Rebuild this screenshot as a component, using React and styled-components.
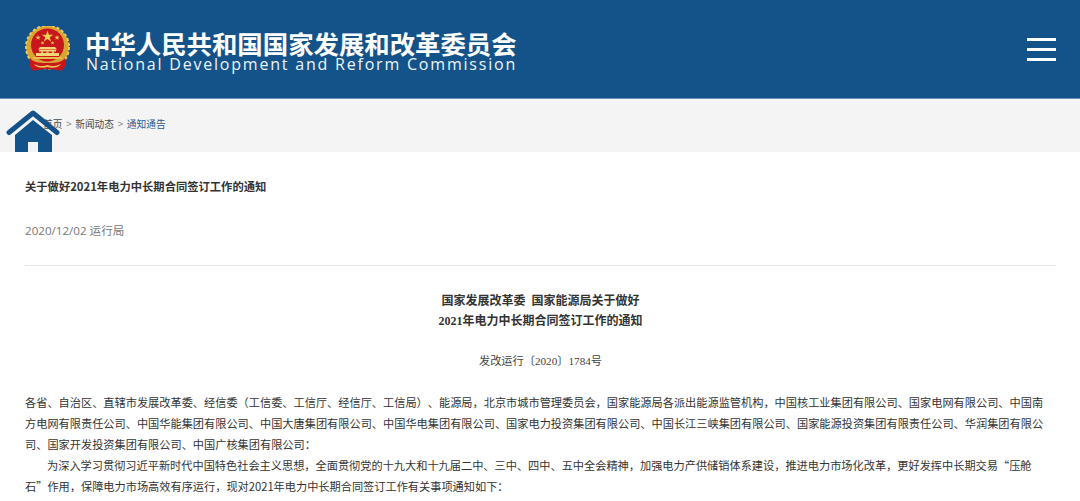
import React from 'react'
import styled, { createGlobalStyle } from 'styled-components'

const GlobalStyle = createGlobalStyle`
  html, body { margin: 0; padding: 0; background: #fff; }
  body { font-family: "Noto Sans CJK SC", sans-serif; text-spacing-trim: space-all; }
`
const Page = styled.div`
  position: relative;
  width: 1080px;
  height: 501px;
  overflow: hidden;
`
const Header = styled.header`
  height: 99px;
  box-sizing: border-box;
  padding: 0 24px 0 25px;
  background: #14538a;
  border-bottom: 1px solid #6f93b8;
  display: flex;
  align-items: center;
  justify-content: space-between;
`
const Brand = styled.div`
  display: flex;
  align-items: center;
  gap: 15px;
`
const BrandText = styled.div`
  display: flex;
  flex-direction: column;
  padding-top: 7px;
  color: #fff;
`
const BrandCn = styled.div`
  font: 700 25.4px/23px "Noto Sans CJK SC", sans-serif;
  white-space: nowrap;
`
const BrandEn = styled.div`
  font: 400 16px/18px "Open Sans", sans-serif;
  letter-spacing: 1.79px;
  margin-left: 1px;
  white-space: nowrap;
  color: #eef3f8;
`
const Menu = styled.button`
  width: 29px;
  height: 23px;
  padding: 0;
  border: 0;
  background: none;
  display: flex;
  flex-direction: column;
  justify-content: space-between;
  margin-top: 1px;
`
const MenuBar = styled.span`
  display: block;
  height: 3px;
  background: #fff;
`
const CrumbBar = styled.nav`
  height: 53px;
  background: #f4f4f4;
  box-sizing: border-box;
  padding: 0 0 3px 43px;
  display: flex;
  align-items: center;
  gap: 3.6px;
  font: 400 9.7px/14px "Noto Sans CJK SC", sans-serif;
  color: #4a4a4a;
`
const CrumbSep = styled.span`
  color: #888;
  font-family: "Liberation Sans", sans-serif;
`
const CrumbCurrent = styled.span`
  color: #2c5c8c;
`
const HomeIcon = styled.svg`
  position: absolute;
  left: 6px;
  top: 110px;
  width: 54px;
  height: 42px;
`
const Article = styled.main`
  padding: 24px 24px 0 25px;
`
const Heading = styled.h1`
  margin: 0;
  font: 700 11.3px/20px "Noto Sans CJK SC", sans-serif;
  color: #333;
`
const Meta = styled.div`
  margin-top: 25px;
  padding-bottom: 24px;
  border-bottom: 1px solid #e5e5e5;
  font: 400 11.6px/20px "Open Sans", "Noto Sans CJK SC", sans-serif;
  color: #777;
`
const Notice = styled.div`
  margin-top: 25px;
  font-family: "Liberation Serif", "Noto Sans CJK SC", serif;
  font-size: 11.2px;
  line-height: 20px;
  color: #333;
  text-align: center;
`
const NoticeTitle = styled.div`
  font-size: 12px;
  font-weight: 700;
`
const DocNumber = styled.div`
  margin-top: 20px;
  color: #444;
`
const Body = styled.div`
  margin-top: 21px;
  padding-right: 11px;
  font: 400 11.2px/21px "Noto Sans CJK SC", sans-serif;
  color: #333;
  text-align: left;
`
const Para = styled.p`
  margin: 0;
  text-indent: ${p => (p.$indent ? '22px' : '0')};
`

const Emblem = () => (
  <svg width="45" height="47" viewBox="0 0 45 47">
    <circle cx="22.5" cy="21" r="21.5" fill="#d9a531" />
    <circle cx="22.5" cy="21" r="21.5" fill="none" stroke="#f0c95a" strokeWidth="2" strokeDasharray="3 2" />
    <circle cx="22.5" cy="19" r="16.5" fill="#c8161d" />
    <path d="M22.5 4.5l1.4 4.2h4.4l-3.6 2.6 1.4 4.2-3.6-2.6-3.6 2.6 1.4-4.2-3.6-2.6h4.4z" fill="#f5d04e" />
    <path d="M13 9l.7 1.8h1.9l-1.5 1.2.6 1.8-1.7-1.1-1.6 1.1.6-1.8-1.5-1.2h1.9zM32 9l.7 1.8h1.9l-1.5 1.2.6 1.8-1.7-1.1-1.6 1.1.6-1.8-1.5-1.2h1.9zM17.5 15l.5 1.3h1.4l-1.1.9.4 1.3-1.2-.8-1.2.8.4-1.3-1.1-.9H17zM27.5 15l.5 1.3h1.4l-1.1.9.4 1.3-1.2-.8-1.2.8.4-1.3-1.1-.9H27z" fill="#f0c64a" />
    <path d="M15 21h15l2 2.5H13zM14 24h17v1.5H14zM11 27h23v3H11z" fill="#f3d573" />
    <path d="M16 25.5h2v1.5h-2zM21.5 25.5h2v1.5h-2zM27 25.5h2v1.5h-2z" fill="#f3d573" />
    <path d="M8 31h29v2H8z" fill="#e9bb4a" />
    <path d="M5 32c3 4 7 5 17.5 5S37 36 40 32l1 8c-2 1-3 3-4 5-4-1-9-2-14.500-2S12 44 8 45c-1-2-2-4-4-5z" fill="#c8161d" />
    <path d="M9 38c4 2 9 3 13.500 1 4.500 2 9 1 13.500-1-3 4-9 4.500-13.500 3-4.500 1.500-10.500 1-13.500-3z" fill="#eec24f" />
  </svg>
)

const App = () => (
  <Page>
    <GlobalStyle />
    <Header>
      <Brand>
        <Emblem />
        <BrandText>
          <BrandCn>中华人民共和国国家发展和改革委员会</BrandCn>
          <BrandEn>National Development and Reform Commission</BrandEn>
        </BrandText>
      </Brand>
      <Menu aria-label="menu">
        <MenuBar />
        <MenuBar />
        <MenuBar />
      </Menu>
    </Header>
    <CrumbBar>
      <span>首页</span>
      <CrumbSep>&gt;</CrumbSep>
      <span>新闻动态</span>
      <CrumbSep>&gt;</CrumbSep>
      <CrumbCurrent>通知通告</CrumbCurrent>
    </CrumbBar>
    <HomeIcon viewBox="0 0 54 42">
      <path d="M3 22.500L27 3l24 19.500" fill="none" stroke="#14538a" strokeWidth="5" strokeLinecap="round" strokeLinejoin="round" />
      <path d="M9 25L27 10 46 25v17H32V32H22v10H9z" fill="#14538a" />
    </HomeIcon>
    <Article>
      <Heading>关于做好2021年电力中长期合同签订工作的通知</Heading>
      <Meta>2020/12/02 运行局</Meta>
      <Notice>
        <NoticeTitle>国家发展改革委&nbsp; 国家能源局关于做好</NoticeTitle>
        <NoticeTitle>2021年电力中长期合同签订工作的通知</NoticeTitle>
        <DocNumber>发改运行〔2020〕1784号</DocNumber>
        <Body>
          <Para>各省、自治区、直辖市发展改革委、经信委（工信委、工信厅、经信厅、工信局）、能源局，北京市城市管理委员会，国家能源局各派出能源监管机构，中国核工业集团有限公司、国家电网有限公司、中国南方电网有限责任公司、中国华能集团有限公司、中国大唐集团有限公司、中国华电集团有限公司、国家电力投资集团有限公司、中国长江三峡集团有限公司、国家能源投资集团有限责任公司、华润集团有限公司、国家开发投资集团有限公司、中国广核集团有限公司：</Para>
          <Para $indent>为深入学习贯彻习近平新时代中国特色社会主义思想，全面贯彻党的十九大和十九届二中、三中、四中、五中全会精神，加强电力产供储销体系建设，推进电力市场化改革，更好发挥中长期交易“压舱石”作用，保障电力市场高效有序运行，现对2021年电力中长期合同签订工作有关事项通知如下：</Para>
        </Body>
      </Notice>
    </Article>
  </Page>
)

export default App
